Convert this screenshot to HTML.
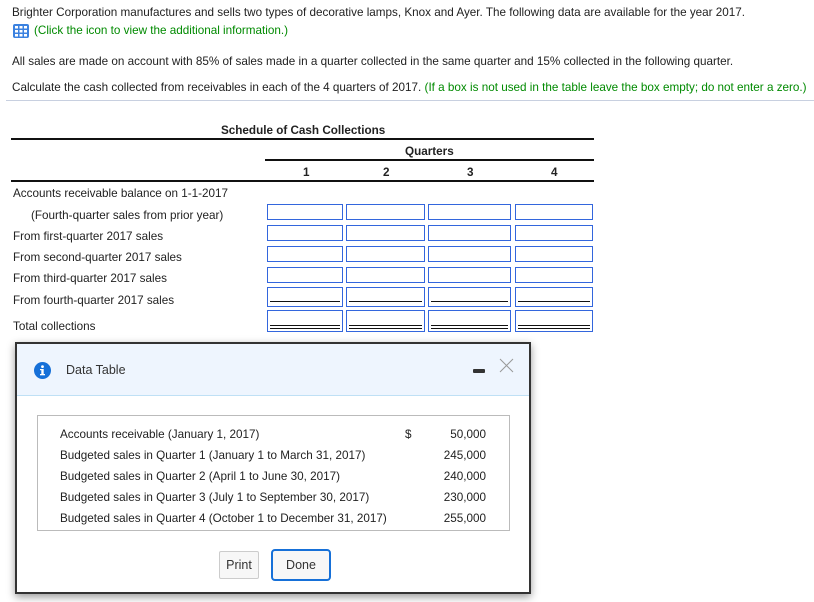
<!DOCTYPE html>
<html><head><style>
*{margin:0;padding:0;box-sizing:border-box}
body{width:814px;height:602px;background:#fff;font-family:"Liberation Sans",Arial,sans-serif;font-size:11.7px;color:#222;position:relative;overflow:hidden}
.a{position:absolute;white-space:nowrap}
.g{color:#008a00}
.box{position:absolute;border:1.5px solid #3366dd;background:#fff}
.l{position:absolute;background:#111;height:1.5px}
</style></head><body>
<div class="a" style="left:12px;top:6px">Brighter Corporation manufactures and sells two types of decorative lamps, Knox and Ayer. The following data are available for the year 2017.</div>
<svg class="a" style="left:13px;top:24px" width="16" height="14" viewBox="0 0 16 14"><rect x="0" y="0" width="16" height="14" rx="2" fill="#3b82e0"/><g fill="#fff"><rect x="2" y="2" width="3" height="2.5"/><rect x="6.5" y="2" width="3" height="2.5"/><rect x="11" y="2" width="3" height="2.5"/><rect x="2" y="6" width="3" height="2.5"/><rect x="6.5" y="6" width="3" height="2.5"/><rect x="11" y="6" width="3" height="2.5"/><rect x="2" y="10" width="3" height="2.5"/><rect x="6.5" y="10" width="3" height="2.5"/><rect x="11" y="10" width="3" height="2.5"/></g></svg>
<div class="a g" style="left:34px;top:24px">(Click the icon to view the additional information.)</div>
<div class="a" style="left:12px;top:55px">All sales are made on account with 85% of sales made in a quarter collected in the same quarter and 15% collected in the following quarter.</div>
<div class="a" style="left:12px;top:81px">Calculate the cash collected from receivables in each of the 4 quarters of 2017. <span class="g">(If a box is not used in the table leave the box empty; do not enter a zero.)</span></div>
<div class="a" style="left:6px;top:100px;width:808px;height:1px;background:#c8d0e0"></div>

<div class="a" style="left:221px;top:124px;font-weight:bold">Schedule of Cash Collections</div>
<div class="l" style="left:11px;top:138px;width:583px"></div>
<div class="a" style="left:405px;top:145px;font-weight:bold">Quarters</div>
<div class="l" style="left:265px;top:159px;width:329px"></div>
<div class="a" style="left:303px;top:166px;font-weight:bold">1</div>
<div class="a" style="left:383px;top:166px;font-weight:bold">2</div>
<div class="a" style="left:467px;top:166px;font-weight:bold">3</div>
<div class="a" style="left:551px;top:166px;font-weight:bold">4</div>
<div class="l" style="left:11px;top:180px;width:583px"></div>

<div class="a" style="left:13px;top:187px">Accounts receivable balance on 1-1-2017</div>
<div class="a" style="left:31px;top:209px">(Fourth-quarter sales from prior year)</div>
<div class="a" style="left:13px;top:230px">From first-quarter 2017 sales</div>
<div class="a" style="left:13px;top:251px">From second-quarter 2017 sales</div>
<div class="a" style="left:13px;top:272px">From third-quarter 2017 sales</div>
<div class="a" style="left:13px;top:294px">From fourth-quarter 2017 sales</div>
<div class="a" style="left:13px;top:320px">Total collections</div>

<div id="grid"></div>
<script>
var cols=[[267,76],[346,79],[428,83],[515,78]];
var rows=[[204,16],[225,16],[246,16],[267,16],[287,20],[310,22]];
var h='';
rows.forEach(function(r,i){cols.forEach(function(c){
h+='<div class="box" style="left:'+c[0]+'px;top:'+r[0]+'px;width:'+c[1]+'px;height:'+r[1]+'px"></div>';
if(i==4)h+='<div class="l" style="left:'+(c[0]+3)+'px;top:'+(r[0]+14)+'px;width:'+(c[1]-6)+'px;height:1px"></div>';
if(i==5){h+='<div class="l" style="left:'+(c[0]+3)+'px;top:'+(r[0]+15)+'px;width:'+(c[1]-6)+'px;height:1px"></div>';
h+='<div class="l" style="left:'+(c[0]+3)+'px;top:'+(r[0]+18)+'px;width:'+(c[1]-6)+'px;height:1px"></div>';}
});});
document.getElementById('grid').innerHTML=h;
</script>

<div class="a" style="left:15px;top:342px;width:516px;height:252px;border:2px solid #333;background:#fff;box-shadow:0 3px 8px rgba(0,0,0,.4)">
  <div class="a" style="left:0;top:0;width:512px;height:52px;background:#eef5fe;border-bottom:1px solid #bfe0f5"></div>
  <svg class="a" style="left:17px;top:18px" width="17" height="17" viewBox="0 0 17 17"><circle cx="8.5" cy="8.5" r="8.5" fill="#1670d8"/><rect x="7.3" y="7" width="2.4" height="6" fill="#fff"/><rect x="6" y="12" width="5" height="1.3" fill="#fff"/><rect x="6" y="7" width="2" height="1.2" fill="#fff"/><circle cx="8.5" cy="4.6" r="1.4" fill="#fff"/></svg>
  <div class="a" style="left:49px;top:19px;font-size:12.5px;color:#333">Data Table</div>
  <div class="a" style="left:456px;top:25px;width:12px;height:4px;background:#333;border-radius:1px"></div>
  <svg class="a" style="left:482px;top:14px" width="15" height="15" viewBox="0 0 15 15"><path d="M1 1L14 14M14 1L1 14" stroke="#999" stroke-width="1"/></svg>
  <div class="a" style="left:20px;top:71px;width:473px;height:116px;border:1px solid #bbb"></div>
  <div class="a" style="left:43px;top:84px">Accounts receivable (January 1, 2017)</div>
  <div class="a" style="left:43px;top:105px">Budgeted sales in Quarter 1 (January 1 to March 31, 2017)</div>
  <div class="a" style="left:43px;top:126px">Budgeted sales in Quarter 2 (April 1 to June 30, 2017)</div>
  <div class="a" style="left:43px;top:147px">Budgeted sales in Quarter 3 (July 1 to September 30, 2017)</div>
  <div class="a" style="left:43px;top:168px">Budgeted sales in Quarter 4 (October 1 to December 31, 2017)</div>
  <div class="a" style="left:388px;top:84px">$</div>
  <div class="a" style="right:43px;top:84px">50,000</div>
  <div class="a" style="right:43px;top:105px">245,000</div>
  <div class="a" style="right:43px;top:126px">240,000</div>
  <div class="a" style="right:43px;top:147px">230,000</div>
  <div class="a" style="right:43px;top:168px">255,000</div>
  <div class="a" style="left:202px;top:207px;width:40px;height:28px;border:1px solid #ccc;border-radius:2px;background:#f7f7f7;font-size:12.5px;text-align:center;line-height:26px;color:#333">Print</div>
  <div class="a" style="left:254px;top:205px;width:60px;height:32px;border:2px solid #1670d8;border-radius:4px;background:#f7f7f7;font-size:12.5px;text-align:center;line-height:28px;color:#333">Done</div>
</div>
</body></html>
